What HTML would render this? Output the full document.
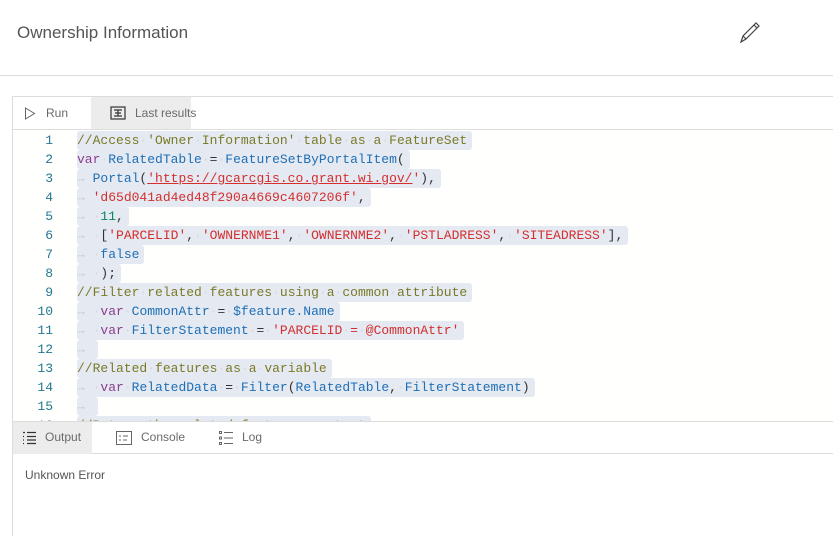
<!DOCTYPE html>
<html><head><meta charset="utf-8">
<style>
*{margin:0;padding:0;box-sizing:border-box}
body{width:833px;height:523px;background:#fff;font-family:"Liberation Sans",sans-serif;position:relative;overflow:hidden}
.title{position:absolute;left:17px;top:23px;font-size:17px;color:#555}
.hdr{position:absolute;left:0;top:75px;width:833px;border-top:1px solid #dcdcdc}
.panel{position:absolute;left:12px;top:96px;width:830px;height:440px;border-top:1px solid #dcdcdc;border-left:1px solid #dcdcdc}
.tb{position:absolute;left:0;top:0;width:830px;height:33px;border-bottom:1px solid #dcdcdc;background:#fff}
.tab{position:absolute;top:0;height:32px;font-size:12px;color:#6a6a6a;line-height:32px;white-space:nowrap}
.ed{position:absolute;left:0;top:33px;width:830px;height:291px;background:#fffffd;overflow:hidden}
.ln{position:absolute;left:0;width:40px;text-align:right;font-family:"Liberation Mono",monospace;font-size:13px;color:#237893}
.cl{position:absolute;left:64px;font-family:"Liberation Mono",monospace;font-size:13px;white-space:pre;height:19px;line-height:19px}
.cl span.h{background:#e5e9f1;border-radius:3px;padding-right:5px;display:inline-block;height:19px}
.c{color:#7a7a28}.k{color:#8a3e8e}.i{color:#1f6fb5}.s{color:#d32f2f}.n{color:#098658}.p{color:#333}.g{color:#c8ccd0}.d{color:#d4d8dc}
.ob{position:absolute;left:0;top:324px;width:830px;height:33px;border-top:1px solid #dcdcdc;border-bottom:1px solid #dcdcdc;background:#fff}
.ot{position:absolute;top:0;height:32px;line-height:31px;font-size:12px;color:#6a6a6a;white-space:nowrap}
</style></head><body>
<div class="title">Ownership Information</div>
<svg style="position:absolute;left:738px;top:20px" width="24" height="24" viewBox="0 0 24 24" fill="none" stroke="#444" stroke-width="1.2"><path d="M3 22 L5 16 L18 3 L21 6 L8 19 Z M5 16 L8 19 M16 5 L19 8"/></svg>
<div class="hdr"></div>
<div class="panel">
 <div class="tb">
  <div class="tab" style="left:0;width:78px">
   <svg style="position:absolute;left:11px;top:10px" width="12" height="13" viewBox="0 0 12 13" fill="none" stroke="#666" stroke-width="1"><path d="M1.5 1 L10.5 6.5 L1.5 12 Z"/></svg>
   <span style="position:absolute;left:33px">Run</span></div>
  <div class="tab" style="left:78px;width:100px;background:#ececec">
   <svg style="position:absolute;left:19px;top:9px" width="16" height="14" viewBox="0 0 16 14" fill="none" stroke="#333" stroke-width="1.2"><rect x="1" y="1" width="14" height="12"/><path d="M4 4h8M5 7h6M4 10h8M8 4v6"/></svg>
   <span style="position:absolute;left:44px">Last results</span></div>
 </div>
 <div class="ed">
  <div class="ln" style="top:1px;line-height:19px">1<br>2<br>3<br>4<br>5<br>6<br>7<br>8<br>9<br>10<br>11<br>12<br>13<br>14<br>15<br>16</div>
  <div class="cl" style="top:1px"><span class="h"><span class="c">//Access<span class="d">·</span>'Owner<span class="d">·</span>Information'<span class="d">·</span>table<span class="d">·</span>as<span class="d">·</span>a<span class="d">·</span>FeatureSet</span></span></div>
  <div class="cl" style="top:20px"><span class="h"><span class="k">var</span><span class="d">·</span><span class="i">RelatedTable</span><span class="d">·</span><span class="p">=</span><span class="d">·</span><span class="i">FeatureSetByPortalItem</span><span class="p">(</span></span></div>
  <div class="cl" style="top:39px"><span class="h"><span class="g">→ </span><span class="i">Portal</span><span class="p">(</span><span class="s" style="text-decoration:underline">'https://gcarcgis.co.grant.wi.gov/</span><span class="s">'</span><span class="p">),</span></span></div>
  <div class="cl" style="top:58px"><span class="h"><span class="g">→ </span><span class="s">'d65d041ad4ed48f290a4669c4607206f'</span><span class="p">,</span></span></div>
  <div class="cl" style="top:77px"><span class="h"><span class="g">→ </span><span class="d">·</span><span class="n">11</span><span class="p">,</span></span></div>
  <div class="cl" style="top:96px"><span class="h"><span class="g">→ </span><span class="d">·</span><span class="p">[</span><span class="s">'PARCELID'</span><span class="p">,</span><span class="d">·</span><span class="s">'OWNERNME1'</span><span class="p">,</span><span class="d">·</span><span class="s">'OWNERNME2'</span><span class="p">,</span><span class="d">·</span><span class="s">'PSTLADRESS'</span><span class="p">,</span><span class="d">·</span><span class="s">'SITEADRESS'</span><span class="p">],</span></span></div>
  <div class="cl" style="top:115px"><span class="h"><span class="g">→ </span><span class="d">·</span><span class="i">false</span></span></div>
  <div class="cl" style="top:134px"><span class="h"><span class="g">→ </span><span class="d">·</span><span class="p">);</span></span></div>
  <div class="cl" style="top:153px"><span class="h"><span class="c">//Filter<span class="d">·</span>related<span class="d">·</span>features<span class="d">·</span>using<span class="d">·</span>a<span class="d">·</span>common<span class="d">·</span>attribute</span></span></div>
  <div class="cl" style="top:172px"><span class="h"><span class="g">→ </span><span class="d">·</span><span class="k">var</span><span class="d">·</span><span class="i">CommonAttr</span><span class="d">·</span><span class="p">=</span><span class="d">·</span><span class="i">$feature.Name</span></span></div>
  <div class="cl" style="top:191px"><span class="h"><span class="g">→ </span><span class="d">·</span><span class="k">var</span><span class="d">·</span><span class="i">FilterStatement</span><span class="d">·</span><span class="p">=</span><span class="d">·</span><span class="s">'PARCELID<span class="d">·</span>=<span class="d">·</span>@CommonAttr'</span></span></div>
  <div class="cl" style="top:210px"><span class="h"><span class="g">→ </span></span></div>
  <div class="cl" style="top:229px"><span class="h"><span class="c">//Related<span class="d">·</span>features<span class="d">·</span>as<span class="d">·</span>a<span class="d">·</span>variable</span></span></div>
  <div class="cl" style="top:248px"><span class="h"><span class="g">→ </span><span class="d">·</span><span class="k">var</span><span class="d">·</span><span class="i">RelatedData</span><span class="d">·</span><span class="p">=</span><span class="d">·</span><span class="i">Filter</span><span class="p">(</span><span class="i">RelatedTable</span><span class="p">,</span><span class="d">·</span><span class="i">FilterStatement</span><span class="p">)</span></span></div>
  <div class="cl" style="top:267px"><span class="h"><span class="g">→ </span></span></div>
  <div class="cl" style="top:286px"><span class="h"><span class="c">//Return<span class="d">·</span>the<span class="d">·</span>related<span class="d">·</span>features<span class="d">·</span>as<span class="d">·</span>text</span></span></div>
 </div>
 <div class="ob">
  <div class="ot" style="left:0;width:79px;background:#ececec">
   <svg style="position:absolute;left:9px;top:9px" width="15" height="14" viewBox="0 0 15 14" fill="none" stroke="#333" stroke-width="1.2"><path d="M1 1.5h2M5 1.5h9M1 5.5h1M5 5.5h9M1 9h1M5 9h9M1 12.5h1M5 12.5h9"/></svg>
   <span style="position:absolute;left:32px">Output</span></div>
  <div class="ot" style="left:103px">
   <svg style="position:absolute;left:0;top:9px" width="16" height="14" viewBox="0 0 16 14" fill="none" stroke="#666" stroke-width="1"><rect x="0.5" y="0.5" width="15" height="13"/><path d="M4 4v2M4 8v2M7 5h5M7 9h4"/></svg>
   <span style="position:absolute;left:25px">Console</span></div>
  <div class="ot" style="left:206px">
   <svg style="position:absolute;left:0;top:9px" width="15" height="15" viewBox="0 0 15 15" fill="none" stroke="#666" stroke-width="1"><rect x="0.5" y="0.5" width="2" height="2"/><rect x="0.5" y="6" width="2" height="2"/><rect x="0.5" y="11.5" width="2" height="2"/><path d="M5 1.5h9M5 7h9M5 12.5h9"/></svg>
   <span style="position:absolute;left:23px">Log</span></div>
 </div>
 <div style="position:absolute;left:12px;top:371px;font-size:12px;color:#555">Unknown Error</div>
</div>
</body></html>
